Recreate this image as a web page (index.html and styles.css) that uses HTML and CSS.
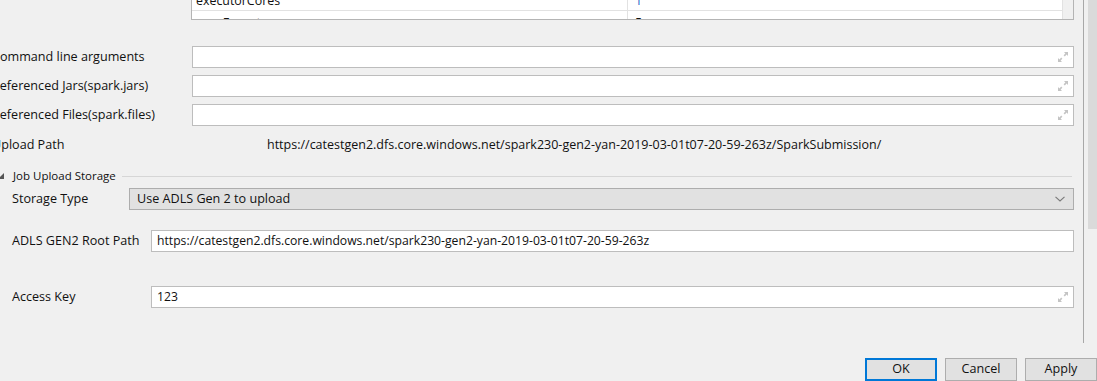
FILE: index.html
```html
<!DOCTYPE html>
<html>
<head>
<meta charset="utf-8">
<link rel="stylesheet" href="styles.css">
</head>
<body>
<div class="dialog">
  <div class="main">
    <div class="pane">
      <div class="table">
        <div class="table-body">
          <div class="table-rows">
            <div class="trow first"><div class="tcell name">executorCores</div><div class="tcell val"><span class="cursor-num">1</span></div></div>
            <div class="trow"><div class="tcell name">numExecutors</div><div class="tcell val">5</div></div>
          </div>
          <div class="table-vscroll"></div>
        </div>
      </div>

      <div class="section-a">
        <div class="row">
          <div class="label wide">Command line arguments</div>
          <div class="field"><span class="expand"><svg width="12" height="12" viewBox="0 0 12 12"><path d="M7 1H11V5L9.6 3.6 7.8 5.4 6.6 4.2 8.4 2.4Z M5 11H1V7L2.4 8.4 4.2 6.6 5.4 7.8 3.6 9.6Z" fill="#c4c4c4"/></svg></span></div>
        </div>
        <div class="row">
          <div class="label wide">Referenced Jars(spark.jars)</div>
          <div class="field"><span class="expand"><svg width="12" height="12" viewBox="0 0 12 12"><path d="M7 1H11V5L9.6 3.6 7.8 5.4 6.6 4.2 8.4 2.4Z M5 11H1V7L2.4 8.4 4.2 6.6 5.4 7.8 3.6 9.6Z" fill="#c4c4c4"/></svg></span></div>
        </div>
        <div class="row">
          <div class="label wide">Referenced Files(spark.files)</div>
          <div class="field"><span class="expand"><svg width="12" height="12" viewBox="0 0 12 12"><path d="M7 1H11V5L9.6 3.6 7.8 5.4 6.6 4.2 8.4 2.4Z M5 11H1V7L2.4 8.4 4.2 6.6 5.4 7.8 3.6 9.6Z" fill="#c4c4c4"/></svg></span></div>
        </div>
        <div class="row upload">
          <div class="label">Upload Path</div>
          <div class="path">https://catestgen2.dfs.core.windows.net/spark230-gen2-yan-2019-03-01t07-20-59-263z/SparkSubmission/</div>
        </div>
      </div>

      <div class="group-head">
        <svg class="tri" width="8" height="8" viewBox="0 0 8 8"><path d="M7 1V7H1Z" fill="#555"/></svg>
        <span class="group-title">Job Upload Storage</span>
        <span class="group-line"></span>
      </div>

      <div class="section-b">
        <div class="row storage">
          <div class="label">Storage Type</div>
          <div class="combo"><span class="combo-text">Use ADLS Gen 2 to upload</span><svg width="10" height="6" viewBox="0 0 10 6"><path d="M0.5 0.8L5 5 9.5 0.8" fill="none" stroke="#7a7a7a" stroke-width="1.1"/></svg></div>
        </div>
        <div class="row root">
          <div class="label">ADLS GEN2 Root Path</div>
          <div class="field text">https://catestgen2.dfs.core.windows.net/spark230-gen2-yan-2019-03-01t07-20-59-263z</div>
        </div>
        <div class="row key">
          <div class="label">Access Key</div>
          <div class="field text">123<span class="expand"><svg width="12" height="12" viewBox="0 0 12 12"><path d="M7 1H11V5L9.6 3.6 7.8 5.4 6.6 4.2 8.4 2.4Z M5 11H1V7L2.4 8.4 4.2 6.6 5.4 7.8 3.6 9.6Z" fill="#c4c4c4"/></svg></span></div>
        </div>
      </div>
    </div>
    <div class="gutter"></div>
    <div class="vscroll"><div class="thumb"></div></div>
  </div>
  <div class="buttons">
    <button class="btn default">OK</button>
    <button class="btn">Cancel</button>
    <button class="btn">Apply</button>
  </div>
</div>
</body>
</html>
```

FILE: styles.css
```css
* { box-sizing: border-box; }
html, body { margin: 0; padding: 0; }
body {
  background: #f0f0f0;
  font-family: "Open Sans", "Noto Sans", "Liberation Sans", sans-serif;
  font-size: 12.6px;
  color: #111;
  overflow: hidden;
}
.dialog {
  width: 1097px;
  height: 381px;
  display: flex;
  flex-direction: column;
  overflow: hidden;
}
.main {
  display: flex;
  height: 343px;
}
.pane {
  width: 1084px;
  border-right: 1px solid #a8a8a8;
  display: flex;
  flex-direction: column;
}
.gutter { width: 4px; }
.vscroll { width: 9px; }
.thumb { height: 229px; background: #dadada; }

/* top table */
.table {
  margin-left: 191px;
  width: 883px;
  height: 20px;
  border: 1px solid #b4b4b4;
  border-top: none;
  background: #fff;
  overflow: hidden;
}
.table-body { display: flex; height: 100%; }
.table-rows { flex: 1; margin-top: -14px; font-size: 12.4px; }
.trow { display: flex; height: 25px; border-bottom: 1px solid #e2e2e2; }
.tcell { line-height: 24px; padding-left: 4px; }
.trow.first .tcell { padding-top: 3px; }
.tcell.name { width: 436px; border-right: 1px solid #e2e2e2; }
.tcell.val { flex: 1; padding-left: 7px; }
.cursor-num { color: #1c64c8; }
.table-vscroll { width: 11px; background: #f0f0f0; border-left: 1px solid #e2e2e2; }

/* rows */
.section-a { margin-top: 26px; display: flex; flex-direction: column; gap: 7px; }
.row { display: flex; align-items: center; }
.label { white-space: nowrap; padding-bottom: 2px; }
.label.wide { width: 200px; margin-left: -8px; }
.field {
  position: relative;
  height: 22px;
  width: 882px;
  background: #fff;
  border: 1px solid #bdbdbd;
  line-height: 20px;
  padding-left: 5px;
  font-size: 12.2px;
}
.expand { position: absolute; right: 4px; top: 4px; line-height: 0; }
.row.upload { margin-top: 1px; height: 22px; }
.row.upload .label { width: 275px; margin-left: -8px; }
.path { font-size: 12.5px; padding-bottom: 2px; }

.group-head {
  display: flex;
  align-items: center;
  margin-top: 12px;
  height: 16px;
}
.tri { margin-left: -3px; margin-right: 8px; }
.group-title { font-size: 11.5px; padding-bottom: 1px; }
.group-line { flex: 1; height: 1px; background: #d6d6d6; margin-left: 6px; margin-right: 11px; }

.section-b { margin-top: 4px; padding-left: 12px; display: flex; flex-direction: column; }
.row.storage .label { width: 117px; }
.combo {
  width: 945px;
  height: 22px;
  background: #e1e1e1;
  border: 1px solid #adadad;
  display: flex;
  align-items: center;
  justify-content: space-between;
  padding: 0 8px 2px 7px;
}
.combo svg { margin-top: 2px; }
.row.root { margin-top: 20px; }
.row.root .label, .row.key .label { width: 139px; }
.row.root .field, .row.key .field { width: 923px; }
.row.key { margin-top: 34px; }

/* buttons */
.buttons {
  display: flex;
  justify-content: flex-end;
  gap: 8px;
  margin-top: 15px;
}
.btn {
  width: 72px;
  height: 23px;
  background: #e1e1e1;
  border: 1px solid #adadad;
  font-family: inherit;
  font-size: 12.6px;
  color: #111;
  padding: 0 0 2px 0;
}
.btn.default { border: 2px solid #0078d7; }
```
